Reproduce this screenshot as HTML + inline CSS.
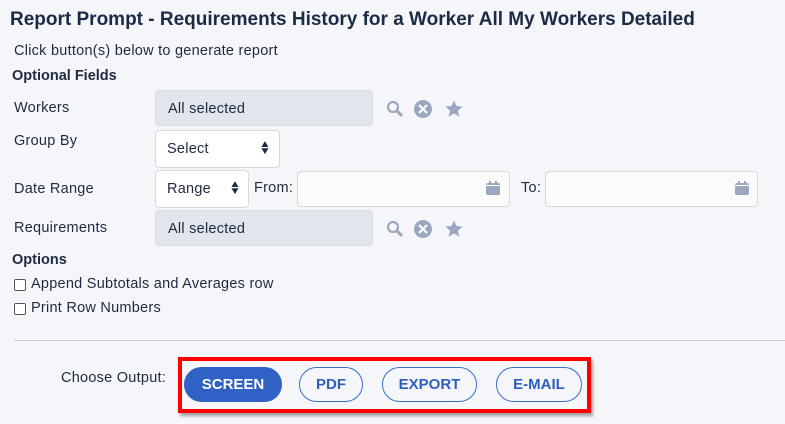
<!DOCTYPE html>
<html><head><style>
body{margin:0;width:785px;height:424px;background:#f5f6fa;font-family:"Liberation Sans",sans-serif;color:#1f2a3d;position:relative;overflow:hidden}
.a{position:absolute;white-space:nowrap}
.t{font-size:14.5px;letter-spacing:0.25px}
.box{position:absolute;border:1px solid #d5d9e0;border-radius:4px;background:#fff;box-sizing:border-box}
.gray{background:#e1e5ec;border-color:#d5d9e0}
.ic{position:absolute}
.btn{position:absolute;top:367px;height:35px;border:1px solid #3a6fc9;border-radius:18px;box-sizing:border-box;color:#2f5fbd;font-weight:bold;font-size:15px;text-align:center;line-height:33px;background:#f5f6fa}
.ar{position:absolute;font-size:10px;line-height:7px;transform:scaleX(1.2)}
</style></head><body>
<div class="a" style="left:10px;top:9px;font-size:19px;font-weight:bold;color:#1c2b45">Report Prompt - Requirements History for a Worker All My Workers Detailed</div>
<div class="a t" style="left:14px;top:43px">Click button(s) below to generate report</div>
<div class="a t" style="left:12px;top:68px;font-weight:bold;letter-spacing:0">Optional Fields</div>
<div class="a t" style="left:14px;top:100px">Workers</div>
<div class="box gray" style="left:155px;top:90px;width:218px;height:36px"></div>
<div class="a t" style="left:168px;top:101px">All selected</div>
<div class="a t" style="left:14px;top:133px">Group By</div>
<div class="box" style="left:155px;top:130px;width:125px;height:38px"></div>
<div class="a t" style="left:167px;top:141px">Select</div>
<div class="ar" style="left:260px;top:141px">▲<br>▼</div>
<div class="a t" style="left:14px;top:181px">Date Range</div>
<div class="box" style="left:155px;top:170px;width:94px;height:38px"></div>
<div class="a t" style="left:167px;top:181px">Range</div>
<div class="ar" style="left:230px;top:181px">▲<br>▼</div>
<div class="a t" style="left:254px;top:180px">From:</div>
<div class="box" style="left:297px;top:171px;width:213px;height:36px;background:#fbfbfc"></div>
<div class="a t" style="left:521px;top:180px">To:</div>
<div class="box" style="left:545px;top:171px;width:213px;height:36px;background:#fbfbfc"></div>
<svg class="ic" style="left:486px;top:181px" width="14" height="14"><rect x="0" y="2" width="14" height="12" rx="2" fill="#9aa7bf"/><rect x="3" y="0" width="2" height="4" fill="#9aa7bf"/><rect x="9" y="0" width="2" height="4" fill="#9aa7bf"/><rect x="0" y="4" width="14" height="1" fill="#fff"/></svg>
<svg class="ic" style="left:735px;top:181px" width="14" height="14"><rect x="0" y="2" width="14" height="12" rx="2" fill="#9aa7bf"/><rect x="3" y="0" width="2" height="4" fill="#9aa7bf"/><rect x="9" y="0" width="2" height="4" fill="#9aa7bf"/><rect x="0" y="4" width="14" height="1" fill="#fff"/></svg>
<div class="a t" style="left:14px;top:220px">Requirements</div>
<div class="box gray" style="left:155px;top:210px;width:218px;height:36px"></div>
<div class="a t" style="left:168px;top:221px">All selected</div>
<svg class="ic" style="left:385px;top:99px" width="84" height="20"><g fill="#9aa7bf" stroke="#9aa7bf"><circle cx="8" cy="8" r="5" fill="none" stroke-width="2.2"/><line x1="12" y1="12" x2="17" y2="17" stroke-width="3"/><circle cx="38" cy="10" r="9" stroke="none"/><path d="M34 6l8 8M42 6l-8 8" stroke="#fff" stroke-width="2.2"/><path d="M69 1.5l2.5 5.5 6 .6-4.5 4 1.3 6-5.3-3.1-5.3 3.1 1.3-6-4.5-4 6-.6z" stroke="none"/></g></svg>
<svg class="ic" style="left:385px;top:219px" width="84" height="20"><g fill="#9aa7bf" stroke="#9aa7bf"><circle cx="8" cy="8" r="5" fill="none" stroke-width="2.2"/><line x1="12" y1="12" x2="17" y2="17" stroke-width="3"/><circle cx="38" cy="10" r="9" stroke="none"/><path d="M34 6l8 8M42 6l-8 8" stroke="#fff" stroke-width="2.2"/><path d="M69 1.5l2.5 5.5 6 .6-4.5 4 1.3 6-5.3-3.1-5.3 3.1 1.3-6-4.5-4 6-.6z" stroke="none"/></g></svg>
<div class="a t" style="left:12px;top:252px;font-weight:bold;letter-spacing:0">Options</div>
<div class="a" style="left:14px;top:279px;width:10px;height:10px;border:1px solid #555;background:#fff;border-radius:2px"></div>
<div class="a t" style="left:31px;top:276px">Append Subtotals and Averages row</div>
<div class="a" style="left:14px;top:303px;width:10px;height:10px;border:1px solid #555;background:#fff;border-radius:2px"></div>
<div class="a t" style="left:31px;top:300px">Print Row Numbers</div>
<div class="a" style="left:14px;top:340px;width:771px;height:1px;background:#c8cbd0"></div>
<div class="a t" style="left:61px;top:370px">Choose Output:</div>
<div class="a" style="left:178px;top:357px;width:405px;height:48px;border:4px solid #f00;box-shadow:2px 3px 3px rgba(0,0,0,.35)"></div>
<div class="btn" style="left:184px;width:98px;background:#2f62c4;border-color:#2f62c4;color:#fff">SCREEN</div>
<div class="btn" style="left:299px;width:64px">PDF</div>
<div class="btn" style="left:382px;width:95px">EXPORT</div>
<div class="btn" style="left:496px;width:86px">E-MAIL</div>
</body></html>
